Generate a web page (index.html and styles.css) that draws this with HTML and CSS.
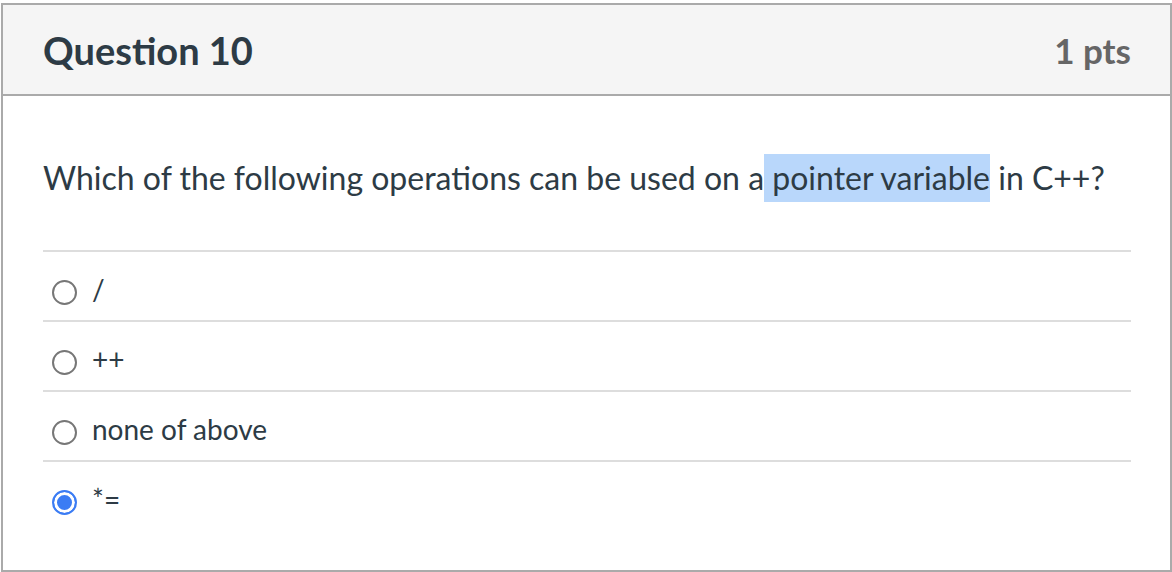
FILE: index.html
```html
<!DOCTYPE html>
<html>
<head>
<meta charset="utf-8">
<link rel="stylesheet" href="styles.css">
</head>
<body>
<div class="question">
  <div class="q-header">
    <h2 class="q-title">Question 10</h2>
    <span class="q-points">1 pts</span>
  </div>
  <div class="q-body">
    <p class="q-text">Which of the following operations can be used on a<span class="sel"> pointer variable</span> in C++?</p>
    <div class="answers">
      <div class="answer"><span class="radio"></span><span class="label">/</span></div>
      <div class="answer"><span class="radio"></span><span class="label">++</span></div>
      <div class="answer"><span class="radio"></span><span class="label">none of above</span></div>
      <div class="answer"><span class="radio checked"></span><span class="label">*=</span></div>
    </div>
  </div>
</div>
</body>
</html>
```
FILE: styles.css
```css
html, body {
  margin: 0;
  padding: 0;
  background: #fff;
}
body {
  font-family: Lato, "Open Sans", sans-serif;
  color: #2d3b45;
}
.question {
  box-sizing: border-box;
  margin: 3px 0 0 1px;
  width: 1171px;
  height: 569px;
  border: 2px solid #aaaaaa;
  display: flex;
  flex-direction: column;
}
.q-header {
  height: 89px;
  background: #f5f5f5;
  border-bottom: 2px solid #aaaaaa;
  display: flex;
  align-items: center;
  justify-content: space-between;
  padding: 0 39px 0 40px;
}
.q-title {
  margin: 0;
  font-size: 38px;
  font-weight: 700;
  color: #2d3b45;
}
.q-points {
  font-size: 35px;
  font-weight: 700;
  color: #666666;
}
.q-body {
  padding: 0 39px 0 40px;
}
.q-text {
  margin: 0;
  padding: 58px 0 49px;
  font-size: 32px;
  line-height: 47px;
}
.sel {
  background: #b9d7fb;
  padding: 4px 0 5px;
}
.answers {
  display: flex;
  flex-direction: column;
}
.answer {
  height: 56px;
  padding-top: 12px;
  border-top: 2px solid #dddddd;
  display: flex;
  align-items: center;
}
.radio {
  box-sizing: border-box;
  width: 25px;
  height: 25px;
  border: 2px solid #777777;
  border-radius: 50%;
  margin-left: 9px;
  margin-right: 15px;
  flex: none;
}
.radio.checked {
  border: 2px solid #3b7cf4;
  background: #3b7cf4;
  box-shadow: inset 0 0 0 3px #ffffff;
}
.label {
  font-size: 28px;
  margin-bottom: 7px;
}
```
